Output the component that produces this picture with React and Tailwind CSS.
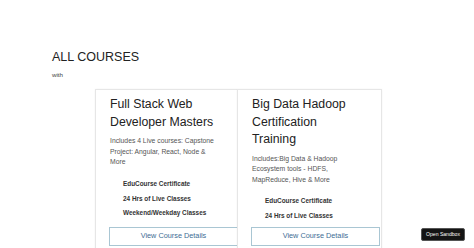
import React from 'react';

const COURSES = [
  {
    title: 'Full Stack Web Developer Masters',
    desc: 'Includes 4 Live courses: Capstone Project: Angular, React, Node & More',
    perks: ['EduCourse Certificate', '24 Hrs of Live Classes', 'Weekend/Weekday Classes'],
    width: 'w-[143px]',
  },
  {
    title: 'Big Data Hadoop Certification Training',
    desc: 'Includes:Big Data & Hadoop Ecosystem tools - HDFS, MapReduce, Hive & More',
    perks: ['EduCourse Certificate', '24 Hrs of Live Classes'],
    width: 'w-[145px] -ml-px',
  },
];

function CourseCard({ course }) {
  return (
    <div className={`${course.width} h-[200px] border border-[#e6e6e6] bg-white flex flex-col shadow-[0_0_2px_rgba(0,0,0,0.05)]`}>
      {/* fixed body height so the button sits at the same height on every card */}
      <div className="h-[137px] overflow-hidden pl-[14px] pt-[6px]">
        <div className="w-[112px]">
          <h2 className="text-[12.3px] leading-[17.5px] text-[#222]">{course.title}</h2>
          <p className="mt-[5px] text-[6.8px] leading-[10.7px] text-[#555]">{course.desc}</p>
          <ul className="mt-[8.7px] pl-[13px]">
            {course.perks.map((perk) => (
              <li key={perk} className="text-[6.4px] leading-[14.7px] font-bold text-[#333]">{perk}</li>
            ))}
          </ul>
        </div>
      </div>
      <button className="ml-[13px] w-[129px] h-[19px] border border-[#a9c6d3] bg-white text-[7.3px] text-[#3e6d94] flex items-center justify-center">
        View Course Details
      </button>
    </div>
  );
}

export default function App() {
  return (
    <div className="relative w-[474px] h-[248px] overflow-hidden bg-white font-['Liberation_Sans',Arial,sans-serif]">
      <div className="pt-[50px] pl-[52px]">
        <h1 className="text-[12.5px] leading-[15px] text-[#222]">ALL COURSES</h1>
        <p className="mt-[6px] text-[6.2px] leading-[8px] text-[#444]">with</p>

        {/* Cards */}
        <div className="mt-[10px] ml-[43px] flex">
          {COURSES.map((course) => (
            <CourseCard key={course.title} course={course} />
          ))}
        </div>
      </div>

      <button className="absolute right-[9px] bottom-[7px] w-[44px] h-[13px] rounded-[2px] border border-[#555] bg-[#141414] text-white text-[5.1px] flex items-center justify-center">
        Open Sandbox
      </button>
    </div>
  );
}
